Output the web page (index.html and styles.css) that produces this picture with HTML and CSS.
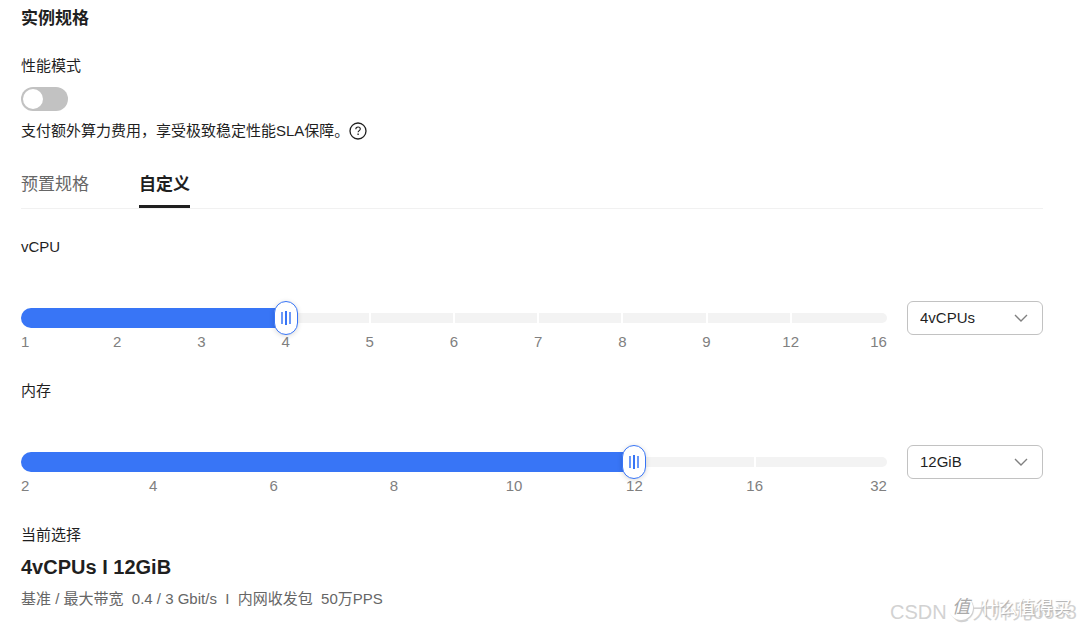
FILE: index.html
```html
<!DOCTYPE html>
<html lang="zh-CN">
<head>
<meta charset="utf-8">
<title>实例规格</title>
<link rel="stylesheet" href="styles.css">
</head>
<body>
<main class="page">
  <h1 class="title">实例规格</h1>

  <section class="mode">
    <label class="label" for="perf">性能模式</label>
    <input class="switch" type="checkbox" role="switch" id="perf">
    <p class="hint">支付额外算力费用，享受极致稳定性能SLA保障。<button class="help" type="button" aria-label="帮助"><svg viewBox="0 0 18 18" width="18" height="18" fill="none" stroke="currentColor"><circle cx="9" cy="9" r="8" stroke-width="1.3"/><path d="M6.8 7.2c0-1.3 1-2.2 2.3-2.2s2.2.8 2.2 2c0 1.5-2.2 1.7-2.2 3.3" stroke-width="1.1"/><path d="M9.1 11.6v1.4" stroke-width="1.3"/></svg></button></p>
  </section>

  <div class="tabs" role="tablist">
    <button class="tab" type="button" role="tab" aria-selected="false">预置规格</button>
    <button class="tab tab-active" type="button" role="tab" aria-selected="true">自定义</button>
  </div>

  <section class="field">
    <label class="label" for="cpu">vCPU</label>
    <div class="control">
      <div class="scale">
        <div class="slider">
          <div class="track"><i></i><i></i><i></i><i></i><i></i><i></i><i></i><i></i><i></i><i></i><i></i></div>
          <div class="fill" style="width:30.5%"></div>
          <input class="range" type="range" id="cpu" min="0" max="10" value="3">
        </div>
        <div class="marks"><span>1</span><span>2</span><span>3</span><span>4</span><span>5</span><span>6</span><span>7</span><span>8</span><span>9</span><span>12</span><span>16</span></div>
      </div>
      <div class="picker">
        <select class="select" aria-label="vCPU"><option>4vCPUs</option></select>
        <svg class="chevron" viewBox="0 0 14 8" width="14" height="8" fill="none" stroke="currentColor" stroke-width="1.4"><path d="M1 1l6 6 6-6"/></svg>
      </div>
    </div>
  </section>

  <section class="field">
    <label class="label" for="mem">内存</label>
    <div class="control">
      <div class="scale">
        <div class="slider">
          <div class="track"><i></i><i></i><i></i><i></i><i></i><i></i><i></i><i></i></div>
          <div class="fill" style="width:70.8%"></div>
          <input class="range" type="range" id="mem" min="0" max="7" value="5">
        </div>
        <div class="marks"><span>2</span><span>4</span><span>6</span><span>8</span><span>10</span><span>12</span><span>16</span><span>32</span></div>
      </div>
      <div class="picker">
        <select class="select" aria-label="内存"><option>12GiB</option></select>
        <svg class="chevron" viewBox="0 0 14 8" width="14" height="8" fill="none" stroke="currentColor" stroke-width="1.4"><path d="M1 1l6 6 6-6"/></svg>
      </div>
    </div>
  </section>

  <section class="summary">
    <h2 class="label">当前选择</h2>
    <p class="choice">4vCPUs I 12GiB</p>
    <p class="detail">基准 / 最大带宽&nbsp; 0.4 / 3 Gbit/s&nbsp; I&nbsp; 内网收发包&nbsp; 50万PPS</p>
  </section>
</main>
<div class="stamp stamp-author">CSDN @大师兄6668</div>
<div class="stamp stamp-site"><span class="badge">值</span>什么值得买</div>
</body>
</html>
```

FILE: styles.css
```css
* { box-sizing: border-box; }

body {
  margin: 0;
  position: relative;
  min-height: 100vh;
  overflow: hidden;
  background: #fff;
  color: #1f1f1f;
  font: 15px/20px "Liberation Sans", "Noto Sans CJK SC", sans-serif;
}

h1, h2, p { margin: 0; }
button, select { font: inherit; color: inherit; }

.page { padding: 7px 37px 0 21px; }

.title { font-size: 17px; line-height: 24px; }

.label {
  display: block;
  font-size: 15px;
  font-weight: 400;
  line-height: 20px;
}

.mode { margin-top: 25px; }

.switch {
  display: flex;
  align-items: center;
  appearance: none;
  width: 47px;
  height: 24px;
  margin: 11px 0 10px;
  padding: 0 2px;
  border-radius: 12px;
  background: #c2c2c2;
}
.switch::before {
  content: "";
  width: 20px;
  height: 20px;
  border-radius: 50%;
  background: #fff;
}
.switch:checked { justify-content: flex-end; background: #3875f6; }

.hint { display: flex; align-items: center; }
.help { display: flex; padding: 0; border: 0; background: none; }

.tabs {
  display: flex;
  gap: 50px;
  margin-top: 32px;
  border-bottom: 1px solid #f1f1f1;
}
.tab {
  padding: 0 0 8px;
  border: 0;
  border-bottom: 3px solid transparent;
  background: none;
  color: #666;
  font-size: 17px;
  line-height: 24px;
}
.tab-active { border-color: #1f1f1f; color: #1f1f1f; font-weight: 700; }

.field { margin-top: 28px; }
.field + .field { margin-top: 32px; }

.control {
  display: flex;
  align-items: flex-start;
  gap: 20px;
  margin-top: 44px;
}
.scale { flex: 1; }
.slider { display: grid; align-items: center; height: 34px; }
.slider > * { grid-area: 1 / 1; }

.track {
  display: flex;
  justify-content: space-between;
  height: 10px;
  padding: 0 11px;
  border-radius: 5px;
  background: #f3f3f3;
}
.track i { width: 2px; background: #fff; }
.track i:first-child, .track i:last-child { background: none; }

.fill {
  height: 20px;
  border-radius: 10px 0 0 10px;
  background: #3875f6;
}

.range {
  appearance: none;
  width: 100%;
  height: 34px;
  margin: 0;
  background: none;
}
.range::-webkit-slider-thumb {
  appearance: none;
  width: 24px;
  height: 34px;
  border: 1px solid #3875f6;
  border-radius: 12px;
  background:
    linear-gradient(#6b98f8, #6b98f8) 6px 50% / 2px 12px no-repeat,
    linear-gradient(#3875f6, #3875f6) 10px 50% / 2px 14px no-repeat,
    linear-gradient(#6b98f8, #6b98f8) 14px 50% / 2px 12px no-repeat,
    #fff;
  box-shadow: 0 1px 5px rgba(0, 0, 0, .15);
}

.marks {
  display: flex;
  justify-content: space-between;
  height: 14px;
  color: #808080;
  line-height: 14px;
}
.marks span { width: 24px; text-align: center; }
.marks span:first-child { text-align: left; }
.marks span:last-child { display: flex; justify-content: flex-end; }

.picker { position: relative; width: 136px; }
.select {
  display: block;
  appearance: none;
  width: 100%;
  height: 34px;
  padding: 0 36px 0 12px;
  border: 1px solid #c2c2c2;
  border-radius: 6px;
  background: #fff;
}
.chevron {
  position: absolute;
  top: 13px;
  right: 15px;
  color: #808080;
  pointer-events: none;
}

.summary { margin-top: 32px; }
.choice { margin-top: 9px; font-size: 20px; font-weight: 700; line-height: 26px; }
.detail { margin-top: 9px; color: #666; }

.stamp {
  position: absolute;
  white-space: nowrap;
  pointer-events: none;
}
.stamp-author {
  right: 3px;
  bottom: 5px;
  color: #d2d2d2;
  font-size: 20px;
  line-height: 26px;
}
.stamp-site {
  display: flex;
  align-items: center;
  gap: 8px;
  right: 9px;
  bottom: 9px;
  color: #fff;
  font-size: 18px;
  line-height: 26px;
  text-shadow: 1px 1px 1px #aaa;
}
.badge {
  width: 24px;
  height: 24px;
  border-radius: 50%;
  background: #fff;
  box-shadow: 1px 1px 1px #ccc;
  color: #aaa;
  text-align: center;
  text-shadow: none;
  font-style: italic;
  line-height: 22px;
}
```
